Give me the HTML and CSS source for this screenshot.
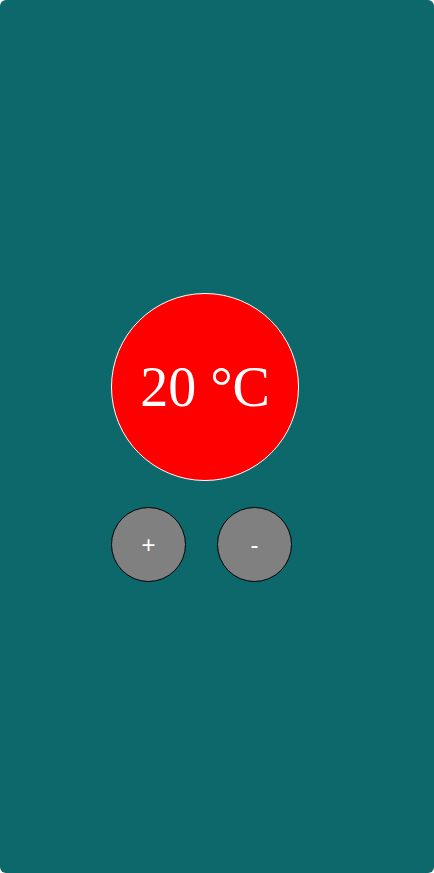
FILE: index.html
```html
<!DOCTYPE html>
<html lang="en">
<head>
<meta charset="utf-8">
<title>Thermostat</title>
<link rel="stylesheet" href="styles.css">
</head>
<body>
<main class="app">
  <div class="stack">
    <div class="dial"><span class="temp">20 °C</span></div>
    <div class="controls">
      <button class="btn" type="button">+</button>
      <button class="btn" type="button">-</button>
    </div>
  </div>
</main>
</body>
</html>
```

FILE: styles.css
```css
html, body {
  margin: 0;
  padding: 0;
  background: #ffffff;
}
.app {
  box-sizing: border-box;
  width: 434px;
  height: 873px;
  background: #0c686a;
  border-radius: 6px;
  display: flex;
  flex-direction: column;
  justify-content: center;
  align-items: flex-start;
  padding-left: 111px;
  padding-top: 2px;
}
.stack {
  display: flex;
  flex-direction: column;
  align-items: flex-start;
  gap: 26px;
}
.dial {
  box-sizing: border-box;
  width: 188px;
  height: 188px;
  border-radius: 50%;
  border: 1px solid #ffffff;
  background: #ff0000;
  display: flex;
  align-items: center;
  justify-content: center;
}
.temp {
  font-family: "Liberation Serif", "Times New Roman", serif;
  font-size: 56px;
  color: #ffffff;
  line-height: 1;
  white-space: nowrap;
}
.controls {
  display: flex;
  gap: 31px;
}
.btn {
  box-sizing: border-box;
  width: 75px;
  height: 75px;
  border-radius: 50%;
  border: 1px solid #000000;
  background: #808080;
  color: #ffffff;
  font-family: "Liberation Sans", Arial, sans-serif;
  font-size: 24px;
  line-height: 1;
  padding: 0;
  margin: 0;
  display: flex;
  align-items: center;
  justify-content: center;
}
```
